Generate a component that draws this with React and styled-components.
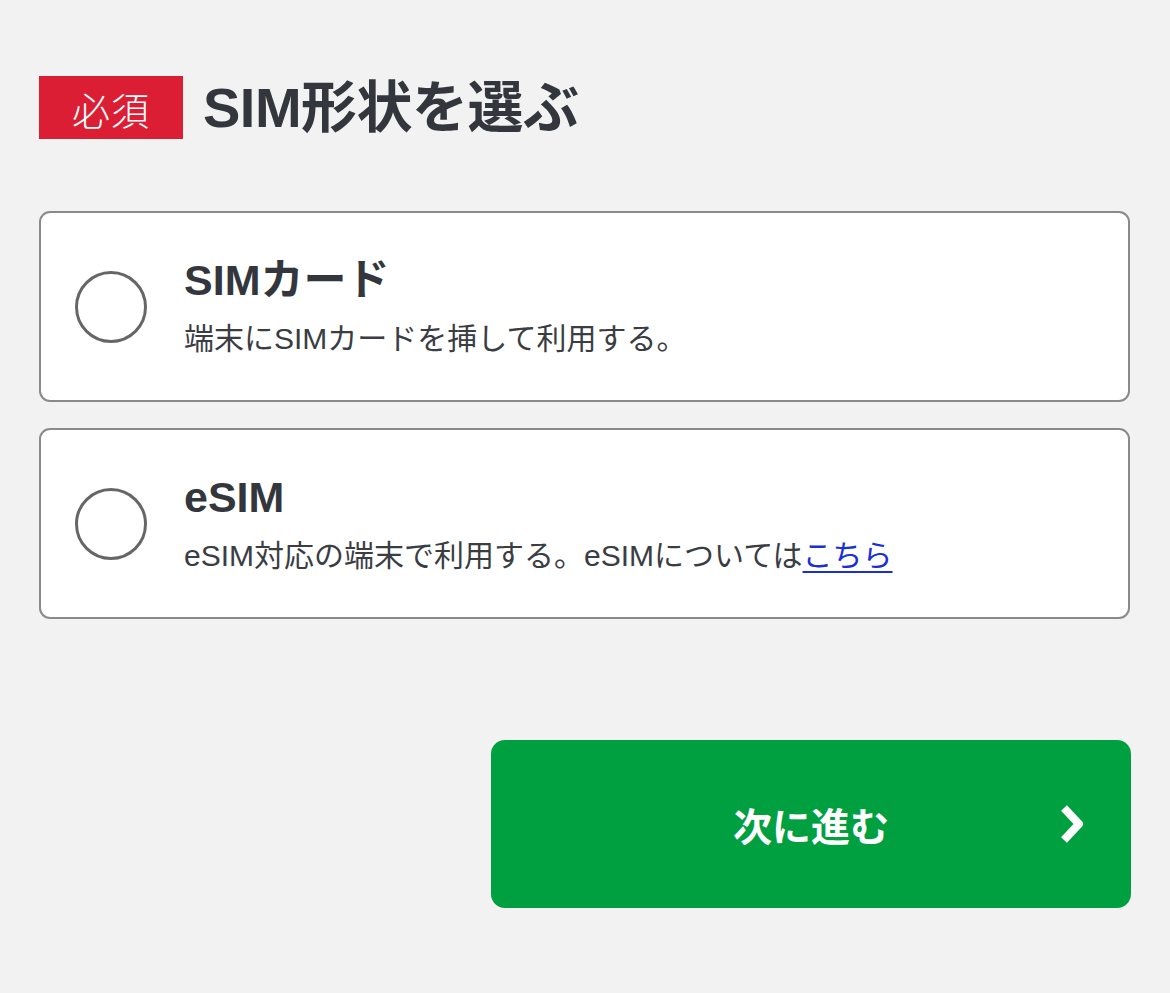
import React from "react";
import styled, { createGlobalStyle } from "styled-components";

const GlobalStyle = createGlobalStyle`
  html, body {
    margin: 0;
    padding: 0;
    background: #f2f2f2;
  }
  body {
    font-family: "Liberation Sans", "Noto Sans CJK JP", sans-serif;
    color: #33373d;
  }
  * { box-sizing: border-box; }
`;

const Page = styled.main`
  width: 1170px;
  min-height: 993px;
  padding: 76px 40px 0 39px;
  background: #f2f2f2;
`;

const Heading = styled.div`
  display: flex;
  align-items: center;
  gap: 20px;
`;

const Badge = styled.span`
  display: flex;
  align-items: center;
  justify-content: center;
  width: 144px;
  height: 63px;
  background: #dc1e35;
  color: #fff;
  font-size: 38px;
  font-weight: 300;
  letter-spacing: 1px;
  padding-top: 2px;
`;

const Title = styled.h1`
  margin: 0;
  font-size: 56px;
  font-weight: 700;
  line-height: 1;
  color: #33373d;
  letter-spacing: -0.5px;
`;

const Options = styled.div`
  display: flex;
  flex-direction: column;
  gap: 26px;
  margin-top: 72px;
`;

const Card = styled.label`
  display: flex;
  align-items: center;
  gap: 37px;
  height: 191px;
  padding: 0 34px;
  background: #fff;
  border: 2.5px solid #8a8a8a;
  border-radius: 11px;
  cursor: pointer;
`;

const Radio = styled.span`
  flex: none;
  width: 72px;
  height: 72px;
  border: 3px solid #666;
  border-radius: 50%;
  background: #fff;
`;

const Texts = styled.div`
  display: flex;
  flex-direction: column;
  gap: 10px;
`;

const OptionTitle = styled.div`
  font-size: 43px;
  font-weight: 700;
  line-height: 55px;
  color: #33373d;
`;

const OptionDesc = styled.div`
  font-size: 30px;
  font-weight: 400;
  line-height: 42px;
  color: #3a3d42;
`;

const Link = styled.a`
  color: #1a2fd6;
  text-decoration: underline;
  text-underline-offset: 5px;
  text-decoration-thickness: 2px;
`;

const Actions = styled.div`
  display: flex;
  justify-content: flex-end;
  margin-top: 121px;
  margin-right: -1px;
`;

const NextButton = styled.button`
  display: grid;
  grid-template-columns: 1fr auto 1fr;
  align-items: center;
  width: 640px;
  height: 168px;
  padding: 0 46px;
  border: none;
  border-radius: 14px;
  background: #00a040;
  color: #fff;
  font-family: "Liberation Sans", "Noto Sans CJK JP", sans-serif;
  font-size: 39px;
  font-weight: 700;
  cursor: pointer;
`;

const ButtonLabel = styled.span`
  grid-column: 2;
`;

const Chevron = styled.svg`
  grid-column: 3;
  justify-self: end;
  width: 26px;
  height: 40px;
`;

export default function App() {
  return (
    <>
      <GlobalStyle />
      <Page>
        <Heading>
          <Badge>必須</Badge>
          <Title>SIM形状を選ぶ</Title>
        </Heading>
        <Options>
          <Card>
            <Radio />
            <Texts>
              <OptionTitle>SIMカード</OptionTitle>
              <OptionDesc>端末にSIMカードを挿して利用する。</OptionDesc>
            </Texts>
          </Card>
          <Card>
            <Radio />
            <Texts>
              <OptionTitle>eSIM</OptionTitle>
              <OptionDesc>
                eSIM対応の端末で利用する。eSIMについては<Link href="#">こちら</Link>
              </OptionDesc>
            </Texts>
          </Card>
        </Options>
        <Actions>
          <NextButton>
            <ButtonLabel>次に進む</ButtonLabel>
            <Chevron viewBox="0 0 26 40">
              <polyline
                points="5,4 20,20 5,36"
                fill="none"
                stroke="#fff"
                strokeWidth="8"
                strokeLinejoin="round"
                strokeLinecap="butt"
              />
            </Chevron>
          </NextButton>
        </Actions>
      </Page>
    </>
  );
}
